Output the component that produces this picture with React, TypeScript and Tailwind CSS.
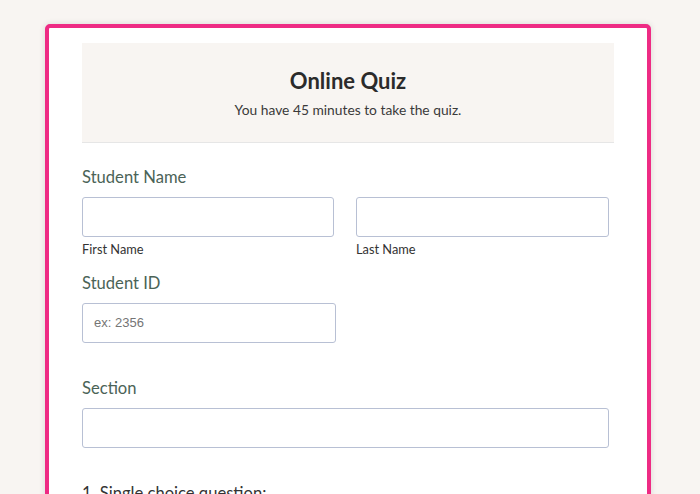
export default function App() {
  return (
    <div className="min-h-[494px] bg-[#f8f5f2] pt-[24px] overflow-hidden" style={{ fontFamily: "Lato, 'Noto Sans', sans-serif" }}>
      <div className="ml-[45px] w-[606px] h-[480px] rounded-[5px] border-4 border-[#ee2b84] bg-white shadow-[0_0_6px_rgba(0,0,0,0.12)] px-[33px] pt-[15px]">
        {/* header */}
        <div className="bg-[#f8f5f2] border-b border-[#e6e6e6] h-[100px] flex flex-col items-center pt-[24px]">
          <h1 className="text-[22px] font-bold text-[#2b2b2b] leading-[28px]">Online Quiz</h1>
          <p className="text-[13.8px] text-[#3a3a3a] mt-[5px]">You have 45 minutes to take the quiz.</p>
        </div>

        <div className="w-[527px]">
          <div className="mt-[23px] text-[16.6px] text-[#4b6357] leading-[22px]">Student Name</div>
          <div className="mt-[9px] flex gap-[22px]">
            <div className="w-[252px]">
              <div className="h-[40px] border border-[#b8c0d4] rounded-[3px]" />
              <div className="mt-[4px] text-[12.8px] text-[#333] leading-[16px]">First Name</div>
            </div>
            <div className="w-[253px]">
              <div className="h-[40px] border border-[#b8c0d4] rounded-[3px]" />
              <div className="mt-[4px] text-[12.8px] text-[#333] leading-[16px]">Last Name</div>
            </div>
          </div>

          <div className="mt-[15px] text-[16.6px] text-[#4b6357] leading-[22px]">Student ID</div>
          <div className="mt-[9px] w-[254px] h-[40px] border border-[#b8c0d4] rounded-[3px] flex items-center px-[11px] text-[13px] text-[#757575]" style={{ fontFamily: "'Liberation Sans', Arial, sans-serif" }}>
            ex: 2356
          </div>

          <div className="mt-[34px] text-[16.6px] text-[#4b6357] leading-[22px]">Section</div>
          <div className="mt-[9px] h-[40px] border border-[#b8c0d4] rounded-[3px]" />

          <div className="mt-[34px] text-[16.6px] text-[#333] leading-[22px]">1. Single choice question:</div>
        </div>
      </div>
    </div>
  );
}
